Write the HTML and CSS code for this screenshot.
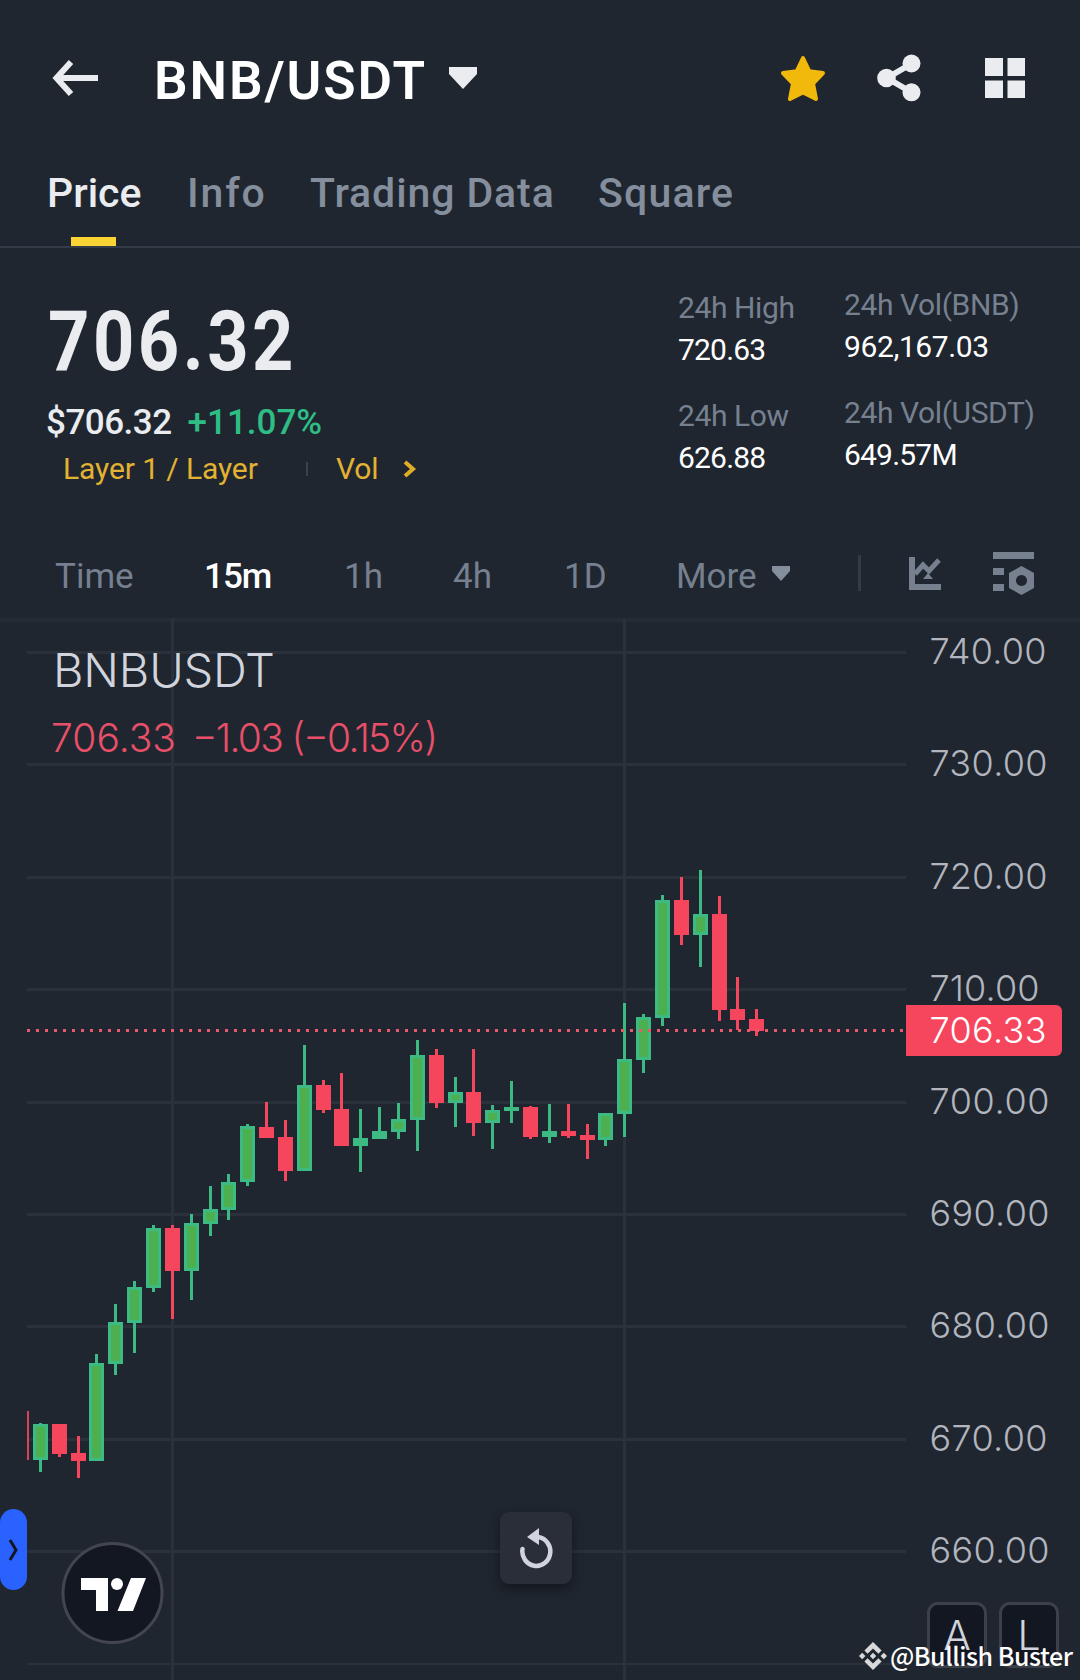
FILE: index.html
```html
<!DOCTYPE html>
<html lang="en">
<head>
  <meta charset="UTF-8">
  <meta name="viewport" content="width=device-width, initial-scale=1.0">
  <title>BNB/USDT</title>
  <link rel="stylesheet" href="styles.css">
</head>
<body>
  <div class="screen">
    <header class="topbar">
      <svg class="back" width="48" height="38" viewBox="0 0 48 38"><path d="M20 3 L5.500 19 L20 35 M6 19 H47" fill="none" stroke="#eaecef" stroke-width="6"/></svg>
      <h1>BNB/USDT</h1>
      <svg class="caret" width="28" height="22" viewBox="0 0 28 22"><path d="M0 0 H28 V7 L14 22 L0 7 Z" fill="#eaecef"/></svg>
      <div class="actions">
        <svg width="46" height="48" viewBox="0 0 46 48"><path d="M23 4 L29.200 17.200 L43 19 L33 29.500 L36 45 L23 38.500 L10 45 L13 29.500 L3 19 L16.800 17.200 Z" fill="#f0b90b" stroke="#f0b90b" stroke-width="4" stroke-linejoin="round"/></svg>
        <svg width="44" height="48" viewBox="0 0 44 48"><path d="M34 10 L10 24 L34 38" fill="none" stroke="#eaecef" stroke-width="6"/><circle cx="9.500" cy="24" r="9.300" fill="#eaecef"/><circle cx="34.500" cy="9.500" r="9" fill="#eaecef"/><circle cx="34.500" cy="38.300" r="9" fill="#eaecef"/></svg>
        <svg width="40" height="40" viewBox="0 0 40 40"><path d="M0 0h18v18H0z M22.500 0h17.500v18H22.500z M0 22.500h18V40H0z M22.500 22.500h17.500V40H22.500z" fill="#eaecef"/></svg>
      </div>
    </header>

    <nav class="tabs">
      <a class="active">Price</a>
      <a class="info">Info</a>
      <a class="trading">Trading Data</a>
      <a class="square">Square</a>
    </nav>

    <section class="summary">
      <div class="price-box">
        <div class="last-price">706.32</div>
        <div class="change"><span>$706.32</span><span class="up">+11.07%</span></div>
        <div class="tags">
          <span class="layer">Layer 1 / Layer</span><i></i><span>Vol</span>
          <svg width="14" height="18" viewBox="0 0 14 18"><path d="M2 2 L10 9 L2 16" fill="none" stroke="#e2ad26" stroke-width="4"/></svg>
        </div>
      </div>
      <dl class="stats">
        <dt>24h High</dt><dd>720.63</dd>
        <dt>24h Low</dt><dd>626.88</dd>
      </dl>
      <dl class="stats vol">
        <dt>24h Vol(BNB)</dt><dd class="wide">962,167.03</dd>
        <dt>24h Vol(USDT)</dt><dd>649.57M</dd>
      </dl>
    </section>

    <div class="intervals">
      <span>Time</span>
      <span class="active">15m</span>
      <span>1h</span>
      <span>4h</span>
      <span>1D</span>
      <span class="more">More <svg width="18" height="15" viewBox="0 0 18 15"><path d="M0 0 H18 V5 L9 15 L0 5 Z" fill="#848e9c"/></svg></span>
      <i></i>
      <svg class="draw" width="33" height="33" viewBox="0 0 33 33" fill="#76808f"><path d="M0 0 H6 V27 H32 V33 H0 Z"/><path d="M6 17 L14 8 L20 14 L30 3" fill="none" stroke="#76808f" stroke-width="5"/><path d="M14 22 L19 16 L24 22 Z"/></svg>
      <svg class="settings" width="42" height="43" viewBox="0 0 42 43" fill="#76808f"><path d="M0 0h41v7H0z M0 16h11v7H0z M0 32h11v7H0z"/><path fill-rule="evenodd" d="M28.500 14 L41 21 V36 L28.500 43 L16 36 V21 Z M28.500 23 a5.500 5.500 0 1 0 .01 0 Z"/></svg>
    </div>

    <main class="chart">
      <svg id="plot" width="1080" height="1062" viewBox="0 618 1080 1062"></svg>
      <button class="handle"><svg width="10" height="22" viewBox="0 0 10 22"><path d="M2 1 L8 11 L2 21" fill="none" stroke="#131722" stroke-width="3"/></svg></button>
      <svg class="tv" width="104" height="104" viewBox="0 0 104 104">
        <circle cx="52.500" cy="52" r="49.500" fill="#131722" stroke="#434651" stroke-width="3"/>
        <path d="M21 37 H48 V70 H36 V49 H21 Z M71 37 H86 L73 70 H57.500 Z" fill="#fff"/><circle cx="57" cy="43" r="6" fill="#fff"/>
      </svg>
      <button class="reset"><svg width="36" height="42" viewBox="0 0 36 42"><path d="M4.500 22 A14 14.500 0 1 0 20 10" fill="none" stroke="#d1d4dc" stroke-width="4.500" stroke-linecap="round"/><path d="M9 10 L21 1 V18 Z" fill="#d1d4dc"/></svg></button>
      <div class="scale-modes"><button>A</button><button>L</button></div>
      <div class="watermark">
        <svg width="28" height="28" viewBox="0 0 28 28" fill="#d9d9d9"><path d="M14 0 L22.600 8.600 L19.400 11.800 L14 6.400 L8.600 11.800 L5.400 8.600 Z M14 28 L5.400 19.400 L8.600 16.200 L14 21.600 L19.400 16.200 L22.600 19.400 Z M3.200 10.800 L6.400 14 L3.200 17.200 L0 14 Z M24.800 10.800 L28 14 L24.800 17.200 L21.600 14 Z M14 10.800 L17.200 14 L14 17.200 L10.800 14 Z"/></svg>
        <span>@Bullish Buster</span>
      </div>
    </main>
  </div>
  <script src="chart.js"></script>
</body>
</html>
```
FILE: styles.css
```css
body {
  margin: 0;
  background-color: #1f262f;
  font-family: Roboto, "Liberation Sans", sans-serif;
  color: #eaecef;
}
button {
  border: none;
  padding: 0;
}
.screen {
  width: 1080px;
  height: 1680px;
  overflow: hidden;
}
.screen svg {
  display: block;
}
.topbar {
  display: flex;
  align-items: center;
  height: 156px;
  padding: 0 55px 0 51px;
}
h1 {
  margin: 6px 0 0 55px;
  width: 295px;
  font-size: 53px;
  font-weight: 600;
  color: #fff;
  letter-spacing: 1.9px;
}
.actions {
  display: flex;
  align-items: center;
  margin-left: auto;
}
.actions svg + svg {
  margin-left: 51px;
}
.actions svg:last-child {
  margin-left: 64px;
}
.tabs {
  display: grid;
  grid-template-columns: 140px 123px 288px 200px;
  height: 90px;
  padding-left: 47px;
  border-bottom: 2px solid #333b47;
  font-size: 41px;
  font-weight: 500;
  line-height: 74px;
  color: #848e9c;
}
.tabs .active {
  color: #eaecef;
  position: relative;
}
.tabs .active::after {
  content: "";
  position: absolute;
  left: 24px;
  bottom: 0;
  width: 45px;
  height: 9px;
  background-color: #fcd535;
}
.tabs .info {
  letter-spacing: 1.9px;
}
.tabs .trading {
  letter-spacing: 0.9px;
}
.tabs .square {
  letter-spacing: 1.2px;
}
.summary {
  display: flex;
  height: 284px;
}
.price-box {
  width: 632px;
  padding: 45px 0 0 46px;
  box-sizing: border-box;
  flex: 0 0 678px;
}
/* tall, narrow digits */
.last-price {
  font-size: 83px;
  font-weight: 700;
  line-height: 98px;
  letter-spacing: 4px;
  transform: translateX(2px) scaleX(0.87);
  transform-origin: 0 0;
}
.change {
  display: flex;
  gap: 16px;
  margin-top: 10px;
  font-size: 35px;
  font-weight: 500;
  line-height: 44px;
}
.change span:first-child {
  letter-spacing: -0.5px;
}
.up {
  color: #2ebd85;
}
.tags {
  display: flex;
  align-items: center;
  padding-left: 17px;
  font-size: 30px;
  line-height: 48px;
  color: #e2b233;
  letter-spacing: -0.1px;
}
.layer {
  width: 243px;
}
.tags i {
  width: 2px;
  height: 14px;
  margin-right: 28px;
  background-color: #3a424e;
}
.tags svg {
  margin-left: 24px;
}
.stats {
  width: 166px;
  margin: 39px 0 0;
  font-size: 30px;
  line-height: 42px;
}
.stats.vol {
  width: 230px;
  margin-top: 36px;
}
dt {
  color: #76808f;
  white-space: nowrap;
  letter-spacing: -0.4px;
}
dd {
  margin: 0 0 24px;
  color: #fff;
  letter-spacing: -0.8px;
}
dd.wide {
  letter-spacing: -0.4px;
}
.intervals {
  display: grid;
  grid-template-columns: 149px 140px 109px 111px 112px 182px 49px 84px 50px;
  align-items: center;
  height: 86px;
  padding-left: 55px;
  font-size: 35px;
  color: #76808f;
}
.intervals span {
  padding-top: 3px;
}
.intervals .active {
  color: #fff;
  font-weight: 500;
  letter-spacing: -1px;
}
.intervals i {
  width: 3px;
  height: 36px;
  margin-top: -4px;
  background-color: #333b47;
}
.more {
  display: flex;
  align-items: center;
}
.more svg {
  margin: -6px 0 0 15px;
}
.draw, .settings {
  margin: -4px 0 0 2px;
}
.chart {
  position: relative;
  height: 1062px;
}
.grid {
  fill: #2a313b;
}
.grid.top {
  fill: #252c36;
}
.axis-label, .legend {
  font-family: Inter, "Liberation Sans", sans-serif;
  font-weight: 300;
}
.axis-label {
  font-size: 36px;
  fill: #b2b5be;
}
.axis-label.current {
  fill: #fff;
}
.symbol {
  font-size: 47px;
  fill: #d1d4dc;
}
.delta {
  font-size: 39px;
  fill: #e8506a;
}
.handle {
  position: absolute;
  left: 0;
  top: 891px;
  width: 27px;
  height: 81px;
  padding-left: 8px;
  border-radius: 14px;
  background-color: #2962ff;
}
.tv {
  position: absolute;
  left: 60px;
  top: 923px;
}
.reset {
  position: absolute;
  left: 500px;
  top: 894px;
  width: 72px;
  height: 72px;
  padding-left: 18px;
  border-radius: 9px;
  background-color: #2a2e39;
  box-shadow: 0 5px 12px rgba(0, 0, 0, 0.4);
}
.scale-modes {
  position: absolute;
  left: 927px;
  top: 984px;
  display: flex;
  gap: 12px;
}
.scale-modes button {
  box-sizing: border-box;
  width: 60px;
  height: 66px;
  border: 3px solid #3c4049;
  border-radius: 11px;
  background-color: #131722;
  color: #d1d4dc;
  font: 300 41px Inter, sans-serif;
}
.watermark {
  position: absolute;
  left: 859px;
  top: 1020px;
  display: flex;
  align-items: center;
  gap: 3px;
  font: 500 25px/36px "Noto Sans CJK SC", "Noto Sans", sans-serif;
  letter-spacing: -0.45px;
  color: #fff;
  white-space: nowrap;
}
.watermark span {
  margin-top: -1px;
}
```
FILE: chart.js
```js
const UP = '#3dba83';
const UP_FILL = '#4caf50';
const DOWN = '#f6465d';

// center x, high, body top, body bottom, low, rising
const candles = [
  [40.5, 1423, 1424, 1460, 1472, 1],
  [59.5, 1424, 1424, 1454, 1457, 0],
  [78.5, 1436, 1453, 1461, 1478, 0],
  [96.5, 1354, 1363, 1461, 1461, 1],
  [115.5, 1304, 1322, 1364, 1375, 1],
  [134.5, 1281, 1287, 1323, 1353, 1],
  [153.5, 1225, 1228, 1288, 1292, 1],
  [172.5, 1225, 1228, 1271, 1319, 0],
  [191.5, 1214, 1223, 1271, 1300, 1],
  [210.5, 1186, 1209, 1224, 1236, 1],
  [228.5, 1174, 1182, 1210, 1220, 1],
  [247.5, 1124, 1126, 1182, 1186, 1],
  [266.5, 1102, 1127, 1138, 1138, 0],
  [285.5, 1120, 1137, 1171, 1181, 0],
  [304.5, 1045, 1085, 1171, 1171, 1],
  [323.5, 1080, 1085, 1110, 1113, 0],
  [341.5, 1073, 1109, 1146, 1146, 0],
  [360.5, 1109, 1138, 1146, 1172, 1],
  [379.5, 1107, 1131, 1139, 1139, 1],
  [398.5, 1103, 1119, 1132, 1139, 1],
  [417.5, 1040, 1055, 1120, 1151, 1],
  [436.5, 1049, 1055, 1103, 1108, 0],
  [455.5, 1077, 1092, 1103, 1127, 1],
  [473.5, 1049, 1092, 1123, 1136, 0],
  [492.5, 1105, 1110, 1123, 1149, 1],
  [511.5, 1081, 1107, 1111, 1123, 1],
  [530.5, 1106, 1107, 1137, 1139, 0],
  [549.5, 1104, 1131, 1137, 1143, 1],
  [568.5, 1104, 1131, 1136, 1138, 0],
  [587.5, 1124, 1135, 1140, 1159, 0],
  [605.5, 1113, 1113, 1140, 1146, 1],
  [624.5, 1003, 1059, 1114, 1137, 1],
  [643.5, 1014, 1017, 1060, 1073, 1],
  [662.5, 895, 900, 1018, 1026, 1],
  [681.5, 877, 900, 935, 945, 0],
  [700.5, 870, 914, 935, 967, 1],
  [719.5, 896, 914, 1010, 1021, 0],
  [737.5, 977, 1009, 1020, 1030, 0],
  [756.5, 1009, 1019, 1031, 1036, 0]
];

// label, grid line y, label width
const levels = [
  ['740.00', 651, 117], ['730.00', 763, 118], ['720.00', 876, 118],
  ['710.00', 988, 110], ['700.00', 1101, 120], ['690.00', 1213, 120],
  ['680.00', 1325, 120], ['670.00', 1438, 118], ['660.00', 1550, 120]
];

function rect(x, y, w, h, fill) {
  return `<rect x="${x}" y="${y}" width="${w}" height="${h}" fill="${fill}"/>`;
}

function gridRect(x, y, w, h, extra = '') {
  return `<rect class="grid ${extra}" x="${x}" y="${y}" width="${w}" height="${h}"/>`;
}

let out = gridRect(0, 618, 1080, 4, 'top') + gridRect(27, 1663, 879, 2);
out += gridRect(171, 618, 3, 1062) + gridRect(623, 618, 3, 1062);

levels.forEach(([label, y, width]) => {
  out += gridRect(27, y, 879, 3);
  out += `<text class="axis-label" x="929.5" y="${y + 13}" textLength="${width}">${label}</text>`;
});

out += rect(27, 1411, 2, 49, '#d4455a');
candles.forEach(([x, high, top, bottom, low, rising]) => {
  const color = rising ? UP : DOWN;
  out += rect(x - 1.5, high, 3, low - high, color);
  out += rect(x - 7.5, top, 15, bottom - top, color);
  if (rising && bottom - top > 9) {
    out += rect(x - 4.5, top + 3, 9, bottom - top - 6, UP_FILL);
  }
});

out += `<path d="M27 1030.500 H906" stroke="#e8596c" stroke-width="3" stroke-dasharray="3 6"/>`;
out += `<path d="M906 1005 H1056 a6 6 0 0 1 6 6 V1050 a6 6 0 0 1 -6 6 H906 Z" fill="${DOWN}"/>`;
out += `<text class="axis-label current" x="929.5" y="1043" textLength="117">706.33</text>`;
out += `<text class="legend symbol" x="53" y="687" textLength="222">BNBUSDT</text>`;
out += `<text class="legend delta" x="51" y="752" textLength="125">706.33</text>`;
out += `<text class="legend delta" x="192" y="752" textLength="246">−1.03 (−0.15%)</text>`;

document.getElementById('plot').innerHTML = out;
```
